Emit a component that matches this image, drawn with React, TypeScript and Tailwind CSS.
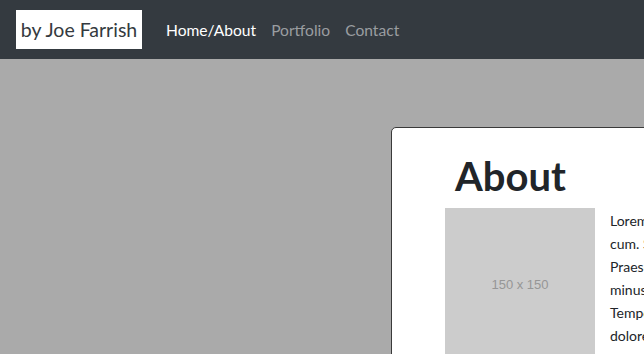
import React from "react";

export default function App() {
  const lines = [
    "Lorem ipsum dolor sit amet, consectetur adipiscing elit. Nulla vel",
    "cum. Sed at magna non dolor cursus varius, quis aliquam sem.",
    "Praesent eget urna at turpis commodo ultricies. Duis aute irure",
    "minus id quod maxime placeat facere possimus, omnis voluptas.",
    "Tempora incidunt ut labore et dolore magnam aliquam quaerat.",
    "dolore eu fugiat nulla pariatur. Excepteur sint occaecat cupidatat.",
  ];
  return (
    <div className="w-[644px] h-[354px] overflow-hidden bg-[#aaaaaa] flex flex-col" style={{ fontFamily: "Lato, 'Noto Sans', sans-serif" }}>
      <nav className="h-[59px] shrink-0 bg-[#343a40] flex items-center pl-4">
        <div className="h-[39px] w-[126px] bg-white flex items-center justify-center text-[19.5px] text-[#343a40]">
          by Joe Farrish
        </div>
        <div className="flex items-center gap-[15px] ml-6 pt-[2px] text-[15.6px]">
          <span className="text-white">Home/About</span>
          <span className="text-[#9a9da0]">Portfolio</span>
          <span className="text-[#9a9da0]">Contact</span>
        </div>
      </nav>
      <div className="flex-1 pl-[391px] pt-[68px]">
        <div className="h-[300px] w-[400px] bg-white border border-[#3a3a3a] rounded-[5px] pt-[20px] pl-[53px]">
          <h1 className="pl-[10px] mb-[4px] text-[40px] font-bold leading-[56px] text-[#212529]">About</h1>
          <div className="flex gap-[15px]">
            <div className="w-[150px] h-[150px] shrink-0 bg-[#cccccc] flex items-center justify-center pt-[4px] text-[13px] text-[#969696]" style={{ fontFamily: "'Liberation Sans', Arial, sans-serif" }}>
              150 x 150
            </div>
            <div className="text-[14px] leading-[23px] text-[#212529] pt-[1px]">
              {lines.map((l) => (
                <div key={l} className="whitespace-nowrap">{l}</div>
              ))}
            </div>
          </div>
        </div>
      </div>
    </div>
  );
}
